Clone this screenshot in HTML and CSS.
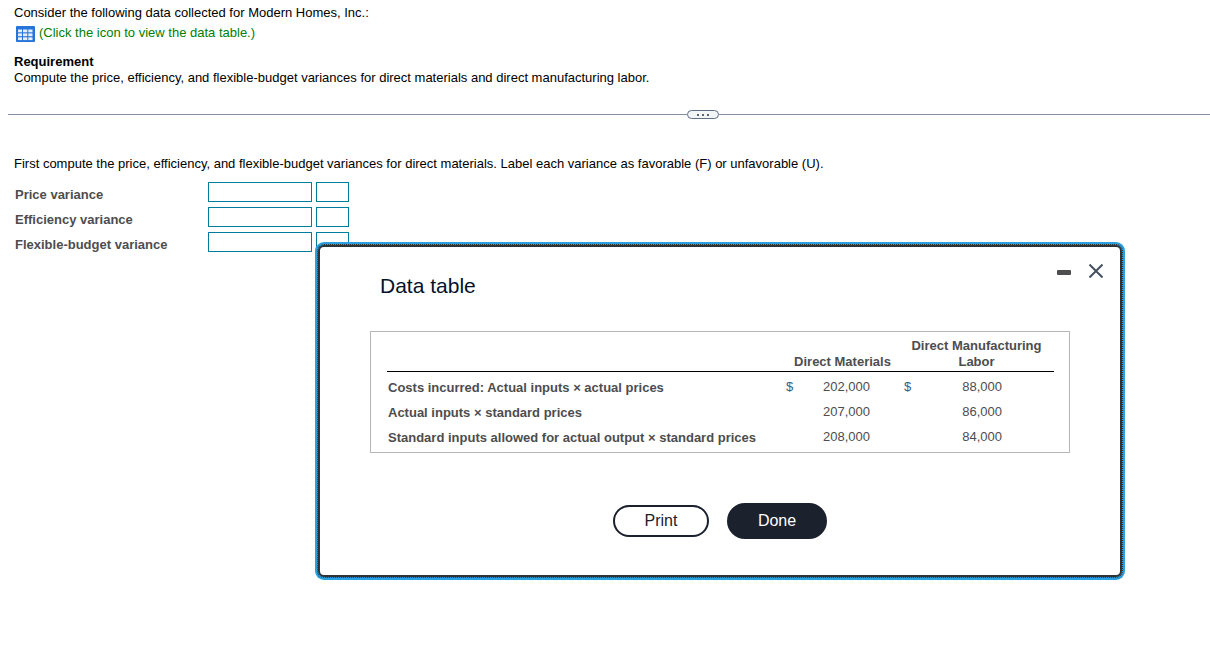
FILE: index.html
```html
<!DOCTYPE html>
<html lang="en">
<head>
    <meta charset="UTF-8">
    <meta name="viewport" content="width=device-width, initial-scale=1.0">
    <title>Modern Homes, Inc.</title>
    <link rel="stylesheet" href="styles.css">
</head>
<body>
    <main>
        <section class="question">
            <p>Consider the following data collected for Modern Homes, Inc.:</p>
            <a href="#data-table" class="data-link">
                <svg class="table-icon" width="19" height="16" viewBox="0 0 19 16" aria-hidden="true">
                    <rect width="19" height="16" rx="1" fill="#2674d9"/>
                    <g fill="#e3eefb">
                        <rect x="2" y="3.5" width="4" height="2.8"/>
                        <rect x="7" y="3.5" width="4.3" height="2.8"/>
                        <rect x="12.3" y="3.5" width="4.2" height="2.8"/>
                        <rect x="2" y="7.4" width="4" height="2.8"/>
                        <rect x="7" y="7.4" width="4.3" height="2.8"/>
                        <rect x="12.3" y="7.4" width="4.2" height="2.8"/>
                        <rect x="2" y="11.3" width="4" height="2.8"/>
                        <rect x="7" y="11.3" width="4.3" height="2.8"/>
                        <rect x="12.3" y="11.3" width="4.2" height="2.8"/>
                    </g>
                </svg>
                <span>(Click the icon to view the data table.)</span>
            </a>
            <h1>Requirement</h1>
            <p>Compute the price, efficiency, and flexible-budget variances for direct materials and direct manufacturing labor.</p>
        </section>

        <div class="splitter">
            <button class="splitter-handle" type="button" aria-label="Resize">
                <svg width="14" height="3" viewBox="0 0 14 3" fill="#5b6470" aria-hidden="true">
                    <rect x="1" y="1" width="2" height="2"/>
                    <rect x="6" y="1" width="2" height="2"/>
                    <rect x="11" y="1" width="2" height="2"/>
                </svg>
            </button>
        </div>

        <form class="answer">
            <p>First compute the price, efficiency, and flexible-budget variances for direct materials. Label each variance as favorable (F) or unfavorable (U).</p>
            <div class="answer-grid">
                <label for="price">Price variance</label>
                <input type="text" id="price">
                <input type="text" id="price-type" aria-label="Price variance F or U">
                <label for="efficiency">Efficiency variance</label>
                <input type="text" id="efficiency">
                <input type="text" id="efficiency-type" aria-label="Efficiency variance F or U">
                <label for="flexible">Flexible-budget variance</label>
                <input type="text" id="flexible">
                <input type="text" id="flexible-type" aria-label="Flexible-budget variance F or U">
            </div>
        </form>
    </main>

    <div class="dialog" id="data-table" role="dialog" aria-labelledby="dialog-title">
        <div class="dialog-header">
            <h2 id="dialog-title">Data table</h2>
            <div class="dialog-tools">
                <button type="button" aria-label="Minimize">
                    <svg width="14" height="14" viewBox="0 0 14 14" aria-hidden="true">
                        <rect x="0" y="6" width="14" height="5" rx="1" fill="#4d4d4f"/>
                    </svg>
                </button>
                <button type="button" aria-label="Close">
                    <svg width="14" height="14" viewBox="0 0 14 14" aria-hidden="true">
                        <path d="M.5.5l13 13M13.5.5l-13 13" stroke="#45515f" stroke-width="2" fill="none"/>
                    </svg>
                </button>
            </div>
        </div>

        <div class="table-box">
            <table>
                <thead>
                    <tr>
                        <td></td>
                        <th colspan="2" scope="col">Direct Materials</th>
                        <th colspan="2" scope="col">Direct Manufacturing<br>Labor</th>
                    </tr>
                </thead>
                <tbody>
                    <tr>
                        <th scope="row">Costs incurred: Actual inputs × actual prices</th>
                        <td class="currency">$</td>
                        <td class="materials">202,000</td>
                        <td class="currency">$</td>
                        <td class="labor">88,000</td>
                    </tr>
                    <tr>
                        <th scope="row">Actual inputs × standard prices</th>
                        <td class="currency"></td>
                        <td class="materials">207,000</td>
                        <td class="currency"></td>
                        <td class="labor">86,000</td>
                    </tr>
                    <tr>
                        <th scope="row">Standard inputs allowed for actual output × standard prices</th>
                        <td class="currency"></td>
                        <td class="materials">208,000</td>
                        <td class="currency"></td>
                        <td class="labor">84,000</td>
                    </tr>
                </tbody>
            </table>
        </div>

        <div class="dialog-buttons">
            <button class="print" type="button">Print</button>
            <button class="done" type="button">Done</button>
        </div>
    </div>
</body>
</html>
```
FILE: styles.css
```css
body {
    margin: 0;
    font-family: "Liberation Sans", Arial, sans-serif;
    font-size: 13px;
    line-height: 16px;
    color: #000;
    background-color: #fff;
}

p, h1, h2 {
    margin: 0;
}

.question {
    padding: 5px 14px 24px;
}

.question h1 {
    margin-top: 13px;
    font-size: 13px;
    font-weight: bold;
}

.data-link {
    display: flex;
    align-items: flex-start;
    gap: 4px;
    height: 16px;
    margin-top: 4px;
    padding-left: 2px;
    color: #008000;
    text-decoration: none;
}

.table-icon {
    margin-top: 1px;
}

/* divider with the drag handle */
.splitter {
    display: flex;
    align-items: center;
    margin-left: 8px;
}

.splitter::before,
.splitter::after {
    content: "";
    height: 1px;
    background-color: #8590a6;
}

.splitter::before {
    flex: 58;
}

.splitter::after {
    flex: 42;
}

.splitter-handle {
    display: flex;
    align-items: center;
    justify-content: center;
    width: 32px;
    height: 9px;
    padding: 0;
    border: 1px solid #5f6f85;
    border-radius: 5px;
    background-color: #f2f4f6;
    cursor: pointer;
}

.answer {
    padding: 37px 14px 0;
}

.answer-grid {
    display: grid;
    grid-template-columns: 190px 104px 33px;
    gap: 5px 4px;
    margin-top: 10px;
}

.answer-grid label {
    padding: 5px 0 0 1px;
    height: 15px;
    font-weight: bold;
    color: #4d4d4f;
}

.answer-grid input {
    box-sizing: border-box;
    width: 100%;
    height: 20px;
    padding: 0 3px;
    border: 1px solid #007d9d;
    border-radius: 0;
    font: inherit;
}

/* dialog */
.dialog {
    position: absolute;
    top: 245px;
    left: 318px;
    right: 88px;
    padding-bottom: 36px;
    border: 2px solid #2e3338;
    border-radius: 6px;
    outline: 1px dotted #333;
    box-shadow: 0 0 0 3px #2a9fe0;
    background-color: #fff;
}

.dialog-header {
    display: flex;
    justify-content: space-between;
    align-items: flex-start;
    padding: 17px 17px 0 60px;
}

.dialog-header h2 {
    padding-top: 10px;
    font-size: 21px;
    font-weight: normal;
    line-height: 24px;
    color: #05112a;
}

.dialog-tools {
    display: flex;
    gap: 18px;
}

.dialog-tools button {
    display: flex;
    padding: 0;
    border: none;
    background: none;
    cursor: pointer;
}

.table-box {
    margin: 33px 50px 0;
    padding: 6px 15px 5px 16px;
    border: 1px solid #b5b5b5;
    color: #4d4d4f;
}

table {
    width: 100%;
    border-collapse: collapse;
}

th, td {
    padding: 0;
    text-align: left;
}

thead th {
    padding: 0 5px 1px 0;
    text-align: center;
    vertical-align: bottom;
}

thead tr {
    border-bottom: 1px solid #000;
}

tbody tr {
    height: 25px;
}

tbody th {
    padding: 7px 0 0 1px;
}

tbody td {
    padding-top: 5px;
}

.currency {
    width: 14px;
    color: #2f5f86;
}

.materials {
    width: 70px;
    padding-right: 34px;
    text-align: right;
}

.labor {
    width: 84px;
    padding-right: 52px;
    text-align: right;
}

.dialog-buttons {
    display: flex;
    justify-content: center;
    align-items: center;
    gap: 18px;
    margin-top: 50px;
}

.dialog-buttons button {
    border: 2px solid #1c212e;
    border-radius: 18px;
    font-family: inherit;
    font-size: 16px;
    cursor: pointer;
}

.print {
    width: 96px;
    height: 32px;
    background-color: #fff;
    color: #1c212e;
}

.done {
    width: 100px;
    height: 36px;
    background-color: #1c212e;
    color: #fff;
}
```
